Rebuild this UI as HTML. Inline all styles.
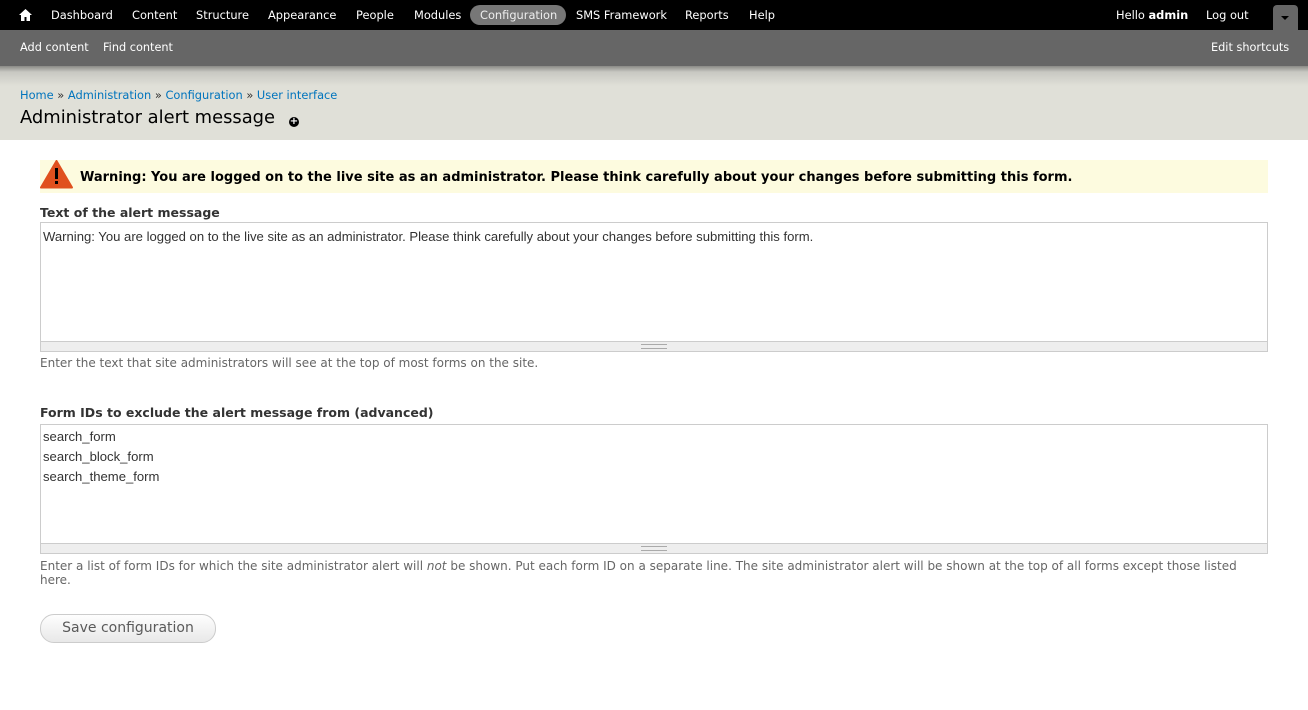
<!DOCTYPE html>
<html><head><style>
body{margin:0;font-family:"DejaVu Sans",sans-serif;background:#fff;width:1308px;height:710px;overflow:hidden;position:relative;font-size:12px}
.a{position:absolute;white-space:nowrap}
#tb{position:absolute;left:0;top:0;width:1308px;height:30px;background:#000}
#tb span{position:absolute;top:8px;color:#fff;font-size:11.4px}
#sc{position:absolute;left:0;top:30px;width:1308px;height:36px;background:#666}
#sc span{position:absolute;top:11px;color:#fff;font-size:11.3px}
#hd{position:absolute;left:0;top:66px;width:1308px;height:74px;background:linear-gradient(#8a8a86 0,#c8c8c2 6px,#e0e0d8 20px,#e0e0d8)}
.bc{color:#0074bd;font-size:11.4px}
.ta{position:absolute;left:40px;width:1228px;border:1px solid #ccc;border-bottom:none;background:#fff;font-family:"Liberation Sans",sans-serif;font-size:13.1px;color:#333;padding:5px 2px;box-sizing:border-box;line-height:20px}
.gr{position:absolute;left:40px;width:1226px;height:9px;background:#eee;border:1px solid #ccc;box-sizing:content-box}
.gr:after{content:"";position:absolute;left:600px;top:2px;width:26px;height:3px;border-top:1px solid #aaa;border-bottom:1px solid #aaa}
.lbl{font-weight:bold;color:#333;font-size:12.5px}
.desc{color:#666;font-size:12px}
</style></head><body>
<div id="tb">
<svg style="position:absolute;left:19px;top:9px" width="13" height="12" viewBox="0 0 13 12"><path d="M6.5 0L0 6h2v6h3.5V8h2v4H11V6h2z" fill="#fff"/></svg>
<span style="left:51px">Dashboard</span><span style="left:132px">Content</span><span style="left:196px">Structure</span><span style="left:268px">Appearance</span><span style="left:356px">People</span><span style="left:414px">Modules</span>
<div style="position:absolute;left:470px;top:5px;width:96px;height:20px;border-radius:10px;background:#777"></div>
<span style="left:480px;color:#eee">Configuration</span><span style="left:576px">SMS Framework</span><span style="left:685px">Reports</span><span style="left:749px">Help</span>
<span style="left:1116px">Hello <b>admin</b></span><span style="left:1206px">Log out</span>
<div style="position:absolute;left:1273px;top:5px;width:25px;height:25px;background:#666;border-radius:4px 4px 0 0"></div>
<div style="position:absolute;left:1281px;top:16px;border-left:4px solid transparent;border-right:4px solid transparent;border-top:4px solid #000"></div>
</div>
<div id="sc"><span style="left:20px">Add content</span><span style="left:103px">Find content</span><span style="left:1211px">Edit shortcuts</span></div>
<div id="hd"></div>
<div class="a bc" style="left:20px;top:88px">Home <span style="color:#333">»</span> Administration <span style="color:#333">»</span> Configuration <span style="color:#333">»</span> User interface</div>
<div class="a" style="left:20px;top:107px;font-size:17.9px;color:#000">Administrator alert message</div>
<div class="a" style="left:289px;top:117px;width:10px;height:10px;border-radius:50%;background:#000;color:#fff;font-size:10px;line-height:10px;text-align:center;font-weight:bold">+</div>
<div class="a" style="left:40px;top:160px;width:1228px;height:33px;background:#fdfbdf"></div>
<svg style="position:absolute;left:40px;top:160px" width="33" height="29" viewBox="0 0 33 29"><path d="M16.5 1L1 27.5h31z" fill="#e0501e" stroke="#e0501e" stroke-width="2" stroke-linejoin="round"/><rect x="15" y="8" width="3" height="11" fill="#000"/><rect x="15" y="21" width="3" height="3" fill="#000"/></svg>
<div class="a" style="left:80px;top:170px;font-weight:bold;font-size:13px;color:#000">Warning: You are logged on to the live site as an administrator. Please think carefully about your changes before submitting this form.</div>
<div class="a lbl" style="left:40px;top:205px">Text of the alert message</div>
<div class="ta" style="top:222px;height:119px;padding-top:4px">Warning: You are logged on to the live site as an administrator. Please think carefully about your changes before submitting this form.</div>
<div class="gr" style="top:341px"></div>
<div class="a desc" style="left:40px;top:356px">Enter the text that site administrators will see at the top of most forms on the site.</div>
<div class="a lbl" style="left:40px;top:405px">Form IDs to exclude the alert message from (advanced)</div>
<div class="ta" style="top:424px;height:119px;padding-top:2px">search_form<br>search_block_form<br>search_theme_form</div>
<div class="gr" style="top:543px"></div>
<div class="a desc" style="left:40px;top:559px;line-height:14px">Enter a list of form IDs for which the site administrator alert will <i>not</i> be shown. Put each form ID on a separate line. The site administrator alert will be shown at the top of all forms except those listed<br>here.</div>
<div class="a" style="left:40px;top:614px;width:174px;height:27px;border:1px solid #ccc;border-radius:14px;background:linear-gradient(#fefefe,#e8e8e8);color:#5a5a5a;font-size:14px;text-align:center;line-height:27px">Save configuration</div>
</body></html>
